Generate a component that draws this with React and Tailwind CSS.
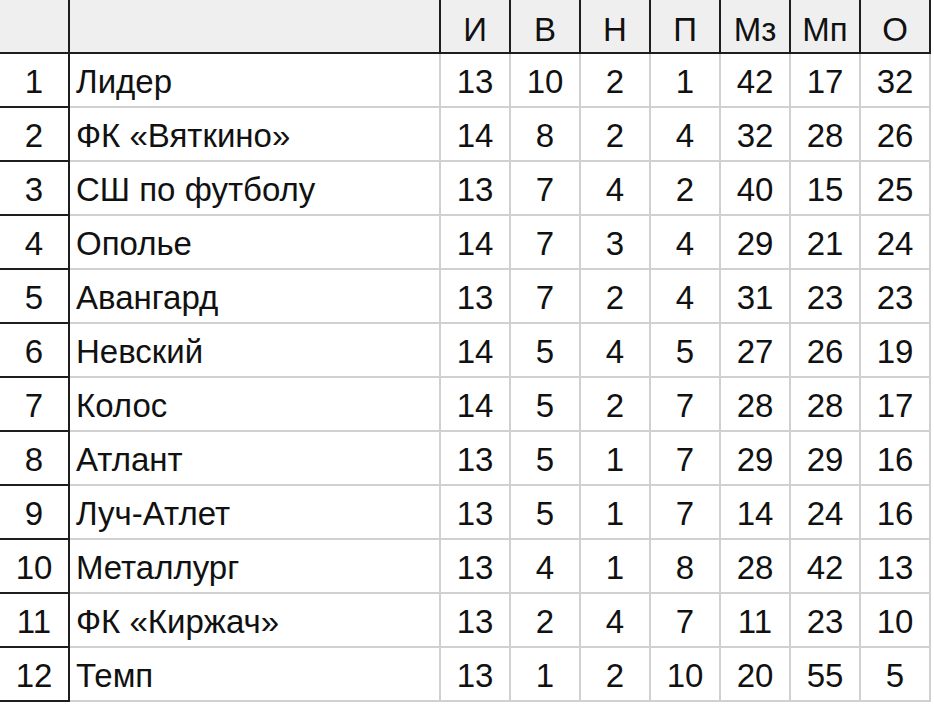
import React from 'react';

const rows = [
  ['Лидер', 13, 10, 2, 1, 42, 17, 32],
  ['ФК «Вяткино»', 14, 8, 2, 4, 32, 28, 26],
  ['СШ по футболу', 13, 7, 4, 2, 40, 15, 25],
  ['Ополье', 14, 7, 3, 4, 29, 21, 24],
  ['Авангард', 13, 7, 2, 4, 31, 23, 23],
  ['Невский', 14, 5, 4, 5, 27, 26, 19],
  ['Колос', 14, 5, 2, 7, 28, 28, 17],
  ['Атлант', 13, 5, 1, 7, 29, 29, 16],
  ['Луч-Атлет', 13, 5, 1, 7, 14, 24, 16],
  ['Металлург', 13, 4, 1, 8, 28, 42, 13],
  ['ФК «Киржач»', 13, 2, 4, 7, 11, 23, 10],
  ['Темп', 13, 1, 2, 10, 20, 55, 5],
];

const heads = ['И', 'В', 'Н', 'П', 'Мз', 'Мп', 'О'];

const App = () => {
  return (
    <div className="w-[934px] h-[704px] bg-white overflow-hidden">
      <div
        className="grid grid-cols-[70px_371px_repeat(7,70px)] auto-rows-[54px] text-[33px] text-[#111] leading-none"
        style={{ fontFamily: '"Liberation Sans", Arial, sans-serif' }}
      >
        <div className="bg-[#efefef] border-r-2 border-b-2 border-[#1e1e1e]" />
        <div className="bg-[#efefef] border-r-2 border-b-2 border-[#1e1e1e]" />
        {heads.map((h) => (
          <div
            key={h}
            className="bg-[#efefef] border-r-2 border-b-2 border-[#1e1e1e] flex items-center justify-center pt-[6px]"
          >
            {h}
          </div>
        ))}

        {rows.map((r, i) => (
          <React.Fragment key={i}>
            <div className="bg-white border-r-2 border-b-2 border-[#1e1e1e] flex items-center justify-center pt-[2px]">
              {i + 1}
            </div>
            <div className="border-r-2 border-b-2 border-[#d0d0d0] flex items-center pl-[6px] pt-[2px]">
              {r[0]}
            </div>
            {r.slice(1).map((v, j) => (
              <div
                key={j}
                className="border-r-2 border-b-2 border-[#d0d0d0] flex items-center justify-center pt-[2px]"
              >
                {v}
              </div>
            ))}
          </React.Fragment>
        ))}
      </div>
    </div>
  );
};

export default App;
